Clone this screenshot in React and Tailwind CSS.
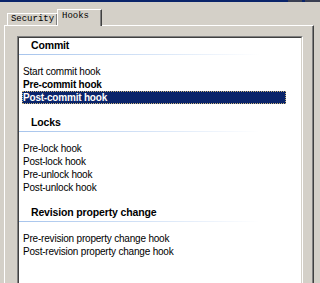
import React from 'react';

const groups = [
  {
    title: 'Commit',
    items: [
      { label: 'Start commit hook' },
      { label: 'Pre-commit hook', bold: true },
      { label: 'Post-commit hook', bold: true, selected: true },
    ],
  },
  {
    title: 'Locks',
    items: [
      { label: 'Pre-lock hook' },
      { label: 'Post-lock hook' },
      { label: 'Pre-unlock hook' },
      { label: 'Post-unlock hook' },
    ],
  },
  {
    title: 'Revision property change',
    items: [
      { label: 'Pre-revision property change hook' },
      { label: 'Post-revision property change hook' },
    ],
  },
];

const uiFont = { fontFamily: '"Liberation Sans", Arial, sans-serif' };
const tabFont = { fontFamily: '"Liberation Mono", "Courier New", monospace' };

const HookGroup = ({ group, first }) => (
  <div className={first ? '' : 'mt-[11px]'}>
    {/* Titre du groupe */}
    <div className="h-[16px] flex items-center pl-[12px] text-[10.5px] tracking-[-0.15px] font-bold text-black">
      {group.title}
    </div>
    <div className="h-px w-[241px] bg-gradient-to-r from-[#a6c4ec] to-white"></div>
    <div className="mt-[10px]">
      {group.items.map((item) => (
        <div
          key={item.label}
          className={`ml-[3px] w-[264px] h-[13px] leading-[13px] pl-[1px] text-[10px] tracking-[-0.2px] whitespace-nowrap ${
            item.bold ? 'font-bold' : ''
          } ${
            item.selected
              ? 'bg-[#0a246a] text-white outline outline-1 outline-dotted outline-[#c9b47a] -outline-offset-1'
              : 'text-black'
          }`}
        >
          {item.label}
        </div>
      ))}
    </div>
  </div>
);

export default function App() {
  return (
    <div className="w-[320px] h-[283px] bg-[#d4d0c8] overflow-hidden flex flex-col" style={uiFont}>
      {/* Barre de titre (bas) */}
      <div className="shrink-0 h-[2px] bg-[#0a246a] flex justify-end">
        <div className="w-[14px] bg-[#3a3f52] mr-[3px]"></div>
        <div className="w-[15px] bg-[#3a3f52]"></div>
      </div>

      {/* Onglets */}
      <div className="shrink-0 h-[23px] flex items-end pl-[7px]" style={tabFont}>
        <div className="w-[50px] h-[12px] border-t border-l border-white shadow-[inset_-1px_0_0_#808080] flex items-center justify-center text-[9px] text-black">
          Security
        </div>
        <div className="relative z-10 -mb-px w-[45px] h-[17px] bg-[#d4d0c8] border-t border-l border-white border-r border-r-[#404040] shadow-[inset_-1px_0_0_#808080] flex items-center pl-[4px] pb-[2px] text-[9px] text-black">
          Hooks
        </div>
      </div>

      {/* Panneau */}
      <div className="ml-[4px] w-[310px] flex-1 min-h-0 border-t border-l border-white border-r border-r-[#404040] shadow-[inset_-1px_0_0_#808080] pt-[10px] pl-[12px]">
        <div className="w-[286px] h-[260px] border-t border-l border-[#808080] border-r border-b border-r-white border-b-white">
          <div className="h-full bg-white border-t border-l border-[#404040] border-r border-b border-r-[#d4d0c8] border-b-[#d4d0c8]">
            {groups.map((g, i) => (
              <HookGroup key={g.title} group={g} first={i === 0} />
            ))}
          </div>
        </div>
      </div>
    </div>
  );
}
